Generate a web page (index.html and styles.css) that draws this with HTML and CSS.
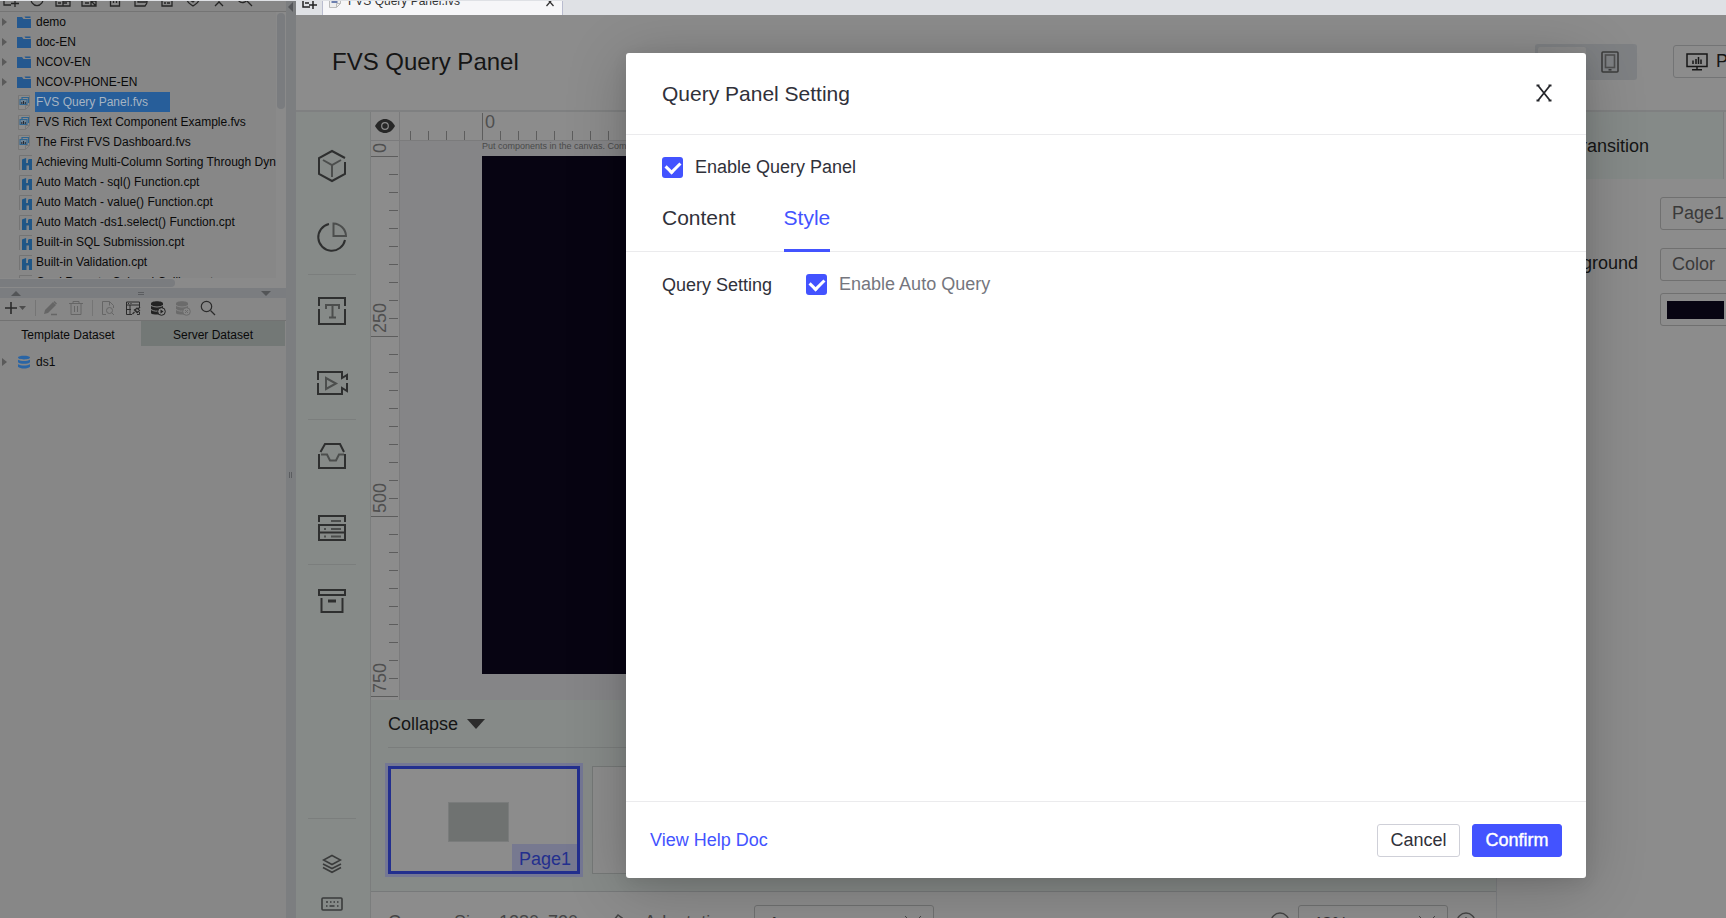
FILE: index.html
```html
<!DOCTYPE html>
<html lang="en">
<head>
<meta charset="utf-8">
<title>FVS Query Panel</title>
<link rel="stylesheet" href="styles.css">
</head>
<body>
<svg class="defs" aria-hidden="true">
  <symbol id="folder" viewBox="0 0 14 12"><path d="M0 1h5l1.500 2H14V12H0z" fill="#24588f"/><path d="M7.500 .6h6v1.500h-5z" fill="#24588f"/></symbol>
  <symbol id="fvs" viewBox="0 0 14 15"><path d="M1.500.5h11v10l-4 4h-7z" fill="#8b8b8b" stroke="#777"/><path d="M8.500 14v-3.500h4" fill="none" stroke="#777"/><path d="M5 4V2.500h6.500V8" fill="none" stroke="#2f6590" stroke-width="1.200"/><rect x="3" y="4.500" width="7" height="5" fill="#6f8495" stroke="#2f6590"/><path d="M4.800 9V7M6.500 9V6M8.300 9V7" stroke="#242a35"/></symbol>
  <symbol id="cpt" viewBox="0 0 14 15"><path d="M1.500 15V.5H14" fill="none" stroke="#747474"/><path d="M4 4.500L8 3v5h2V5l1-1h3v11h-3v-4.500H8.500V15H4z" fill="#1f5686"/><path d="M8.500 3v4.500M10 15v-4" fill="none" stroke="#6a8499" stroke-width=".8"/></symbol>
</svg>
<div class="app">
  <aside class="sidebar">
    <div class="file-tools">
      <button aria-label="New"><svg viewBox="0 0 16 16"><path d="M8 14H1V4h9M12 8v8M8 12.500h8"/></svg></button>
      <button aria-label="Refresh"><svg viewBox="0 0 16 16"><path d="M2.500 7a5.800 5.800 0 1 0 11 0M11 9h5"/></svg></button>
      <button aria-label="Open folder"><svg viewBox="0 0 16 16"><path d="M1 3v12h14V3M8 15v-5h7M3 9h3M3 12h3M8 12h4"/></svg></button>
      <button aria-label="Rename"><svg viewBox="0 0 16 16"><path d="M1 3v12h14V3M4 12h4M10 15v-5h5M10 10l5 5"/></svg></button>
      <button aria-label="Delete"><svg viewBox="0 0 16 16"><path d="M3.500 3v12h9V3M6.500 8v4M9.500 8v4"/></svg></button>
      <button aria-label="Copy"><svg viewBox="0 0 16 16"><path d="M2 6v9h10l2-3M5 3v8h9V3"/></svg></button>
      <button aria-label="Paste"><svg viewBox="0 0 16 16"><path d="M3 3v12h10V3M5 12h2M8 12h3M5 9h6"/></svg></button>
      <button aria-label="Permission"><svg viewBox="0 0 16 16"><path d="M2 8c0 4 3 5 6 7 3-2 6-3 6-7M5 9l3 2 3-3"/></svg></button>
      <button aria-label="Collapse tree"><svg viewBox="0 0 16 16"><path d="M4 15l4-4 4 4M8 5v6"/></svg></button>
      <button aria-label="Search"><svg viewBox="0 0 16 16"><path d="M1 9c3 4 8 3 9-1M9.500 9.500L15 15"/></svg></button>
    </div>
    <div class="tree-box">
      <ul class="tree">
        <li class="branch"><svg class="i-folder"><use href="#folder"/></svg><span>demo</span></li>
        <li class="branch"><svg class="i-folder"><use href="#folder"/></svg><span>doc-EN</span></li>
        <li class="branch"><svg class="i-folder"><use href="#folder"/></svg><span>NCOV-EN</span></li>
        <li class="branch"><svg class="i-folder"><use href="#folder"/></svg><span>NCOV-PHONE-EN</span></li>
        <li class="selected"><svg class="i-file"><use href="#fvs"/></svg><span>FVS Query Panel.fvs</span></li>
        <li><svg class="i-file"><use href="#fvs"/></svg><span>FVS Rich Text Component Example.fvs</span></li>
        <li><svg class="i-file"><use href="#fvs"/></svg><span>The First FVS Dashboard.fvs</span></li>
        <li><svg class="i-file i-cpt"><use href="#cpt"/></svg><span>Achieving Multi-Column Sorting Through Dynamic Parameters.cpt</span></li>
        <li><svg class="i-file i-cpt"><use href="#cpt"/></svg><span>Auto Match - sql() Function.cpt</span></li>
        <li><svg class="i-file i-cpt"><use href="#cpt"/></svg><span>Auto Match - value() Function.cpt</span></li>
        <li><svg class="i-file i-cpt"><use href="#cpt"/></svg><span>Auto Match -ds1.select() Function.cpt</span></li>
        <li><svg class="i-file i-cpt"><use href="#cpt"/></svg><span>Built-in SQL Submission.cpt</span></li>
        <li><svg class="i-file i-cpt"><use href="#cpt"/></svg><span>Built-in Validation.cpt</span></li>
        <li><svg class="i-file i-cpt"><use href="#cpt"/></svg><span>Card Report - Colored Calling.cpt</span></li>
      </ul>
      <div class="vscroll"><div class="vthumb"></div></div>
    </div>
    <div class="hscroll"><div class="hthumb"></div></div>
    <div class="split-h"><i class="up"></i><i class="grip"></i><i class="down"></i></div>
    <div class="data-tools">
      <button class="add" aria-label="Add dataset"><svg width="24" height="16" viewBox="0 0 24 16"><path d="M1 8h12M7 2v12" stroke="#2b2b2b" stroke-width="1.600"/><path d="M15 6h7l-3.500 4z" fill="#4d4d4d"/></svg></button>
      <i class="bar"></i>
      <button aria-label="Edit"><svg width="16" height="16" viewBox="0 0 16 16"><path d="M1 14l1-4 8-8 3 3-8 8z" fill="#666"/><path d="M11 1.500L13.500 4M8 14.500h6" stroke="#666" stroke-width="1.300"/></svg></button>
      <button aria-label="Delete"><svg width="16" height="16" viewBox="0 0 16 16" fill="none" stroke="#666"><path d="M1 3.500h14M5 3.500v-2h6v2M3 3.500v11h10v-11M6.500 6v6M9.500 6v6"/></svg></button>
      <i class="bar"></i>
      <button aria-label="Preview"><svg width="16" height="16" viewBox="0 0 16 16" fill="none" stroke="#666"><path d="M6 14.500H2.500V1.500h7l4 4V8M9.500 1.500v4"/><circle cx="9.500" cy="10.500" r="3"/><path d="M11.500 12.500l2.500 2.500"/></svg></button>
      <button aria-label="Connection"><svg width="16" height="16" viewBox="0 0 16 16" fill="none" stroke="#2b2b2b"><path d="M7 14.500H1.500V2h13v5M1.500 5h13M1.500 9.500H6M5 5v9M3 3.500h1M5.500 3.500h1M14.500 12v2.500H12"/><path d="M7.500 14l2-2M9 9.500l3.500 3.500M10 10l2-2 2.500 2.500-2 2zM13 9l2-2" stroke-width="1.200"/></svg></button>
      <button aria-label="Data cache"><svg width="16" height="16" viewBox="0 0 16 16"><path d="M1 3.500C1 .5 13 .5 13 3.500V13c0 2-12 2-12 0z" fill="#222"/><path d="M1 5.500c3 2 9 2 12 0M1 9.500c3 2 6 2 9 1" stroke="#878787" fill="none"/><circle cx="11.500" cy="11.500" r="3.800" fill="#878787" stroke="#222"/><path d="M10.500 9.500l3 2-3 2z" fill="#222"/></svg></button>
      <button aria-label="Clear cache"><svg width="16" height="16" viewBox="0 0 16 16"><path d="M1 3.500C1 .5 13 .5 13 3.500V13c0 2-12 2-12 0z" fill="#6b6b6b"/><path d="M1 5.500c3 2 9 2 12 0M1 9.500c3 2 6 2 9 1" stroke="#878787" fill="none"/><circle cx="11.500" cy="11.500" r="3.800" fill="#878787" stroke="#6b6b6b"/><path d="M10 10l3 3M13 10l-3 3" stroke="#6b6b6b"/></svg></button>
      <button aria-label="Search"><svg width="16" height="16" viewBox="0 0 16 16" fill="none" stroke="#2b2b2b" stroke-width="1.200"><circle cx="6.500" cy="6.500" r="5.200"/><path d="M10.500 10.500l4.500 4.500"/></svg></button>
    </div>
    <div class="data-tabs"><button class="on">Template Dataset</button><button>Server Dataset</button></div>
    <ul class="tree data-tree">
      <li class="branch"><svg class="i-folder i-db" viewBox="0 0 14 14"><path d="M1 2.500C1 0 13 0 13 2.500S1 5 1 2.500M1 4.800c3 1.600 9 1.600 12 0v2.400c-2 2-10 2-12 0zM1 9.300c3 1.600 9 1.600 12 0v2.500c-2 2.400-10 2.400-12 0z" fill="#2a65a5"/></svg><span>ds1</span></li>
    </ul>
  </aside>
  <div class="split-v"><i class="left"></i><i class="vgrip"></i></div>

  <div class="main">
    <div class="file-tabs">
      <button class="new-tab" aria-label="New tab"><svg width="16" height="16" viewBox="0 0 16 16" fill="none" stroke="#222" stroke-width="1.500"><path d="M9 13H2V3M4 9h4M4 5h4M12 7v8M8 11h8"/></svg></button>
      <div class="file-tab"><svg class="i-tab" viewBox="0 0 13 14"><path d="M.5.500h11v9l-4 4h-7z" fill="#eee" stroke="#bbb"/><path d="M7.500 13.500v-4h4" fill="none" stroke="#bbb"/><rect x="2.500" y="5" width="6" height="4" fill="#6d7fae"/></svg><span>FVS Query Panel.fvs</span><button aria-label="Close tab"><svg width="10" height="10" viewBox="0 0 10 10"><path d="M1.500 1l7 8M8.500 1l-7 8" stroke="#333" stroke-width="1.300"/></svg></button></div>
    </div>

    <div class="designer">
      <header class="head">
        <h1>FVS Query Panel</h1>
        <div class="head-actions">
          <div class="device"><button class="pc" aria-label="Desktop"></button><button class="phone" aria-label="Mobile"><svg width="18" height="22" viewBox="0 0 18 22" fill="none" stroke="#3c3c3c" stroke-width="1.600"><rect x="1" y="1" width="16" height="20" rx="1"/><rect x="4.500" y="4" width="9" height="12.500" stroke="#4e4e4e"/><path d="M7.500 18.800h3"/></svg></button></div>
          <button class="preview"><svg width="22" height="18" viewBox="0 0 22 18" fill="none" stroke="#161616" stroke-width="1.500"><rect x="1" y="1" width="20" height="12.500"/><path d="M11 13.500V17M6 16.800h10M7 11V7.500M10 11V6M12.500 11V4M15 11V6.500"/></svg><span>Preview</span></button>
        </div>
      </header>
      <div class="body">
        <nav class="tools">
          <button aria-label="3D"><svg width="30" height="34" viewBox="0 0 30 34"><path d="M28 9L15 2 2 9v16l13 7 13-7V13"/><path class="soft" d="M6 11l9 5 9-5M15 16v12"/></svg></button>
          <button aria-label="Chart"><svg width="32" height="34" viewBox="0 0 32 34"><path d="M13 3a13.500 13.500 0 1 0 16 16"/><path class="soft" d="M17.500 2.500v12.500H30A13 13 0 0 0 17.500 2.500z"/></svg></button>
          <hr>
          <button aria-label="Text"><svg width="30" height="30" viewBox="0 0 30 30"><path d="M2 10V2h26v8M2 13v15h26V13"/><path class="soft" d="M9 13V9h13v4M15.500 9v12M12 21.500h7"/></svg></button>
          <button aria-label="Media"><svg width="34" height="26" viewBox="0 0 34 26"><path d="M3 10V2h24v6l5-3v5M3 13v11h24v-6l5 3v-8"/><path class="soft" d="M11 8v11l10-5.500z"/></svg></button>
          <hr>
          <button aria-label="Box"><svg width="30" height="28" viewBox="0 0 30 28"><path d="M3.500 10L8 2h15l4 8M2 12v14h26V12"/><path class="soft" d="M4 12.500h6l3 6h6l3-6h5"/></svg></button>
          <button aria-label="Form"><svg width="30" height="28" viewBox="0 0 30 28"><path d="M2 8V2h26v6M2 11h26v15H2zM2 18.500h26"/><path class="soft" d="M14 7h10M14 15h10M14 22.500h10M7 15h2M7 22.500h2"/></svg></button>
          <hr>
          <button aria-label="Archive"><svg width="30" height="26" viewBox="0 0 30 26"><path d="M2 2h26v5H2zM4.500 10v14h21V10"/><path d="M11 13h8" stroke-width="3"/></svg></button>
          <div class="tools-end">
            <hr>
            <button aria-label="Layers"><svg class="thin" width="20" height="20" viewBox="0 0 20 20"><path d="M10 1.500l8.500 4.500-8.500 4.500L1.500 6zM1 10l9 4.500 9-4.500M1 13.500l9 4.800 9-4.800"/></svg></button>
            <button aria-label="Shortcuts"><svg class="thin" width="22" height="14" viewBox="0 0 22 14"><rect x="1" y="1" width="20" height="12" rx="1"/><path d="M5 5h2M9 5h1.500M12.500 5H14M16 5h1.500M5 9h1.500M8.500 9h5M16 9h1.500"/></svg></button>
          </div>
        </nav>
        <section class="work">
          <div class="stage">
            <button class="eye" aria-label="Show rulers"><svg width="20" height="14" viewBox="0 0 20 14"><path d="M0 7C3 2 6 0 10 0s7 2 10 7c-3 5-6 7-10 7S3 12 0 7z" fill="#272727"/><circle cx="10" cy="7" r="3.300" fill="none" stroke="#8c8c8c" stroke-width="1.200"/></svg></button>
            <div class="ruler-x"><div class="lead"></div><div class="seg">0</div></div>
            <div class="ruler-y"><div class="first"><span>0</span></div><div class="seg"><span>250</span></div><div class="seg"><span>500</span></div><div class="seg"><span>750</span></div></div>
            <div class="viewport"><p>Put components in the canvas. Components outside the canvas will not be displayed.</p><div class="canvas"></div></div>
          </div>
          <div class="pages">
            <button class="collapse">Collapse <i></i></button>
            <div class="thumbs">
              <button class="thumb current"><i></i><span>Page1</span></button>
              <button class="thumb" aria-label="Add page"></button>
            </div>
          </div>
          <footer class="status">
            <span>Canvas Size: 1280x720</span>
            <svg class="pencil" width="20" height="20" viewBox="0 0 20 20" fill="none" stroke="#444" stroke-width="1.500"><path d="M3 13L12 2l4 3-9 11-5 1zM10 5l4 3"/></svg>
            <label for="adapt">Adaptation</label>
            <select id="adapt"><option>Auto</option></select>
            <div class="zoomer">
              <button aria-label="Zoom out"><svg width="20" height="20" viewBox="0 0 20 20"><circle cx="10" cy="10" r="9"/><path d="M5 10h10"/></svg></button>
              <select class="pct" aria-label="Zoom"><option>48%</option></select>
              <button aria-label="Zoom in"><svg width="20" height="20" viewBox="0 0 20 20"><circle cx="10" cy="10" r="9"/><path d="M5 10h10M10 5v10"/></svg></button>
            </div>
          </footer>
        </section>
        <aside class="props">
          <div class="props-title">Page Transition</div>
          <div class="fields">
            <label for="pname">Name</label><input id="pname" value="Page1">
            <label for="pbg">Background</label><input id="pbg" value="Color">
            <span></span><button class="swatch" aria-label="Background color"><i></i></button>
          </div>
        </aside>
      </div>
    </div>

    <div class="overlay">
      <div class="modal" role="dialog" aria-labelledby="mt">
        <div class="modal-head"><h2 id="mt">Query Panel Setting</h2><button aria-label="Close"><svg width="16" height="18" viewBox="0 0 16 18"><path d="M2 1.500L14 16.500M14 1.500L2 16.500M.5 1.500h3M12.500 1.500h3M.5 16.500h3M12.500 16.500h3" stroke="#25262b" stroke-width="1.800"/></svg></button></div>
        <label class="check enable"><input type="checkbox" checked>Enable Query Panel</label>
        <div class="modal-tabs"><button>Content</button><button class="on">Style</button></div>
        <div class="setting"><span>Query Setting</span><label class="check muted"><input type="checkbox" checked>Enable Auto Query</label></div>
        <div class="modal-foot"><a href="#">View Help Doc</a><button>Cancel</button><button class="primary">Confirm</button></div>
      </div>
    </div>
  </div>
</div>
</body>
</html>
```

FILE: styles.css
```css
* { box-sizing: border-box; }
body { margin: 0; overflow: hidden; font-family: "Liberation Sans", Arial, sans-serif; font-size: 18px; color: #151515; }
button { font: inherit; color: inherit; background: none; border: 0; padding: 0; margin: 0; }
ul, p, h1, h2 { margin: 0; padding: 0; font-weight: normal; list-style: none; }
svg { display: block; flex: none; }
.defs { display: none; }
.app { display: flex; height: 100vh; border-top: 1px solid #dfe1e5; }

/* file sidebar */
.sidebar { width: 286px; flex: none; display: flex; flex-direction: column; background: #878787; font-size: 12px; color: #0a0a0a; }
.file-tools { height: 11px; flex: none; overflow: hidden; display: flex; align-items: flex-end; gap: 10px; padding: 0 0 4px 3px; border-bottom: 1px solid #747474; }
.file-tools svg { width: 16px; height: 16px; fill: none; stroke: #262626; stroke-width: 1.3; }
.tree-box { height: 266px; flex: none; display: flex; overflow: hidden; }
.tree { flex: 1; min-width: 0; overflow: hidden; }
.tree li { height: 20px; display: flex; align-items: center; padding-left: 17px; white-space: nowrap; }
.tree .branch { padding-left: 2px; }
.branch::before { content: ""; border: solid transparent; border-width: 4px 0 4px 5px; border-left-color: #5a5a5a; margin-right: 10px; }
.i-folder { width: 14px; height: 12px; margin-right: 4px; }
.i-db { height: 14px; }
.i-file { width: 14px; height: 15px; margin-right: 4px; }
.i-cpt { margin: 0 3px 0 1px; }
.tree span { line-height: 20px; padding: 0 1px; }
.selected span { width: 135px; background: #275e9a; color: #a6b4c2; }
.vscroll { width: 10px; padding: 1px; background: #8a8a8a; }
.vthumb { height: 96px; border-radius: 4px; background: #7a7c7f; }
.hscroll { height: 10px; flex: none; padding: 1px 0; background: #8a8a8a; }
.hthumb { width: 175px; height: 8px; border-radius: 0 4px 4px 0; background: #7a7c7f; }
.split-h { height: 10px; flex: none; background: #7b7d80; display: flex; align-items: center; justify-content: space-between; padding: 0 15px 0 11px; }
.up { border: solid transparent; border-width: 0 5px 5px; border-bottom-color: #535557; }
.down { border: solid transparent; border-width: 5px 5px 0; border-top-color: #535557; }
.grip { width: 6px; height: 3px; border: solid #5b5d60; border-width: 1px 0; }
.data-tools { height: 23px; flex: none; display: flex; align-items: center; gap: 9px; padding: 0 0 2px 4px; border-bottom: 1px solid #727272; }
.data-tools .bar { width: 1px; height: 16px; background: #757575; margin: 0 -2px 0 -1px; }
.data-tools .add { margin-right: -1px; }
.data-tabs { display: flex; height: 25px; flex: none; padding-right: 1px; }
.data-tabs button { flex: 1; padding-top: 2px; background: #737876; }
.data-tabs .on { flex: none; width: 141px; background: none; padding-right: 5px; }
.data-tree { padding-top: 6px; }
.split-v { width: 10px; flex: none; background: #7c7e80; display: flex; flex-direction: column; align-items: center; justify-content: space-between; padding: 1px 1px 0 0; }
.left { border: solid transparent; border-width: 5px 5px 5px 0; border-right-color: #55575a; }
.vgrip { width: 3px; height: 6px; border: solid #5b5d60; border-width: 0 1px; margin: 0 0 440px; }

/* document tabs */
.main { flex: 1; min-width: 0; display: flex; flex-direction: column; position: relative; }
.file-tabs { height: 14px; flex: none; overflow: hidden; display: flex; align-items: flex-end; background: #dfe1e5; font-size: 12px; color: #333; }
.new-tab { width: 26px; padding: 0 0 5px 5px; }
.file-tab { width: 241px; height: 28px; display: flex; align-items: center; background: #f6f6f8; border: solid #b9bccf; border-width: 0 1px; padding: 0 7px 0 6px; }
.i-tab { width: 13px; height: 14px; margin-right: 6px; }
.file-tab span { flex: 1; }
.file-tab button { padding-top: 2px; }

/* designer */
.designer { flex: 1; min-height: 0; display: flex; flex-direction: column; background: #8c8c8c; }
.head { height: 97px; flex: none; display: flex; align-items: center; justify-content: space-between; padding: 0 0 2px 36px; border-bottom: 2px solid #7f8081; }
.head h1 { font-size: 24px; }
.head-actions { width: 191px; display: flex; align-items: center; gap: 36px; overflow: hidden; }
.device { width: 102px; height: 36px; flex: none; display: flex; padding: 3px; border-radius: 3px; background: #7e8083; }
.device button { flex: 1; display: flex; align-items: center; justify-content: center; border-radius: 2px; }
.pc { background: #8a8a8a; }
.preview { display: flex; align-items: center; gap: 8px; height: 33px; width: 120px; flex: none; padding-left: 12px; border: 1px solid #737475; border-radius: 3px; }
.body { flex: 1; min-height: 0; display: flex; }
.tools { width: 75px; flex: none; display: flex; flex-direction: column; padding-top: 18px; background: #868a88; border-right: 1px solid #7b7d7d; }
.tools button { height: 72px; width: 100%; padding-right: 2px; display: flex; align-items: center; justify-content: center; }
.tools hr { width: 48px; height: 1px; margin: 0 auto 0 12px; border: 0; background: #7b7e7d; flex: none; }
.tools svg { fill: none; stroke: #2e2f2f; stroke-width: 2; }
.tools .soft { stroke: #4c4e4d; }
.tools .thin { stroke: #3a3b3b; stroke-width: 1.6; }
.tools-end { margin-top: auto; height: 100px; overflow: hidden; }
.tools-end hr { margin-bottom: 25px; }
.tools-end button { height: 40px; }

.work { flex: 1; min-width: 0; display: flex; flex-direction: column; }
.stage { flex: 1; min-height: 0; display: grid; grid-template: 29px minmax(0, 1fr) / 29px minmax(0, 1fr); overflow: hidden; }
.eye { display: flex; align-items: center; justify-content: center; border: solid #7b7b7c; border-width: 0 1px 1px 0; }
.ruler-x { display: flex; border-bottom: 1px solid #7b7b7c; color: #4f4f4f; padding-top: 1px; }
.ruler-x .lead { width: 82px; background: repeating-linear-gradient(to left, transparent 0 17px, #5d5d5d 17px 18px) right bottom / 100% 9px no-repeat; }
.ruler-x .seg { flex: 1; border-left: 1px solid #5d5d5d; padding-left: 2px; line-height: 18px; background: repeating-linear-gradient(to right, transparent 0 17px, #5d5d5d 17px 18px) left bottom / 100% 9px no-repeat; }
.ruler-y { border-right: 1px solid #7b7b7c; color: #4f4f4f; overflow: hidden; }
.ruler-y div { height: 180px; display: flex; align-items: flex-end; margin-right: 1px; border-bottom: 1px solid #5d5d5d; background: repeating-linear-gradient(to bottom, transparent 0 17px, #5d5d5d 17px 18px) right top / 9px 100% no-repeat; }
.ruler-y .first { height: 16px; background: none; }
.ruler-y span { writing-mode: vertical-rl; transform: rotate(180deg); line-height: 18px; padding-top: 3px; }
.viewport { background: #858587; padding-left: 82px; overflow: hidden; }
.viewport p { height: 15px; line-height: 11px; font-size: 9px; color: #4a4a4a; white-space: nowrap; }
.canvas { width: 921px; height: 518px; background: #070412; }

.pages { height: 191px; flex: none; padding: 0 17px; background: #868a88; }
.collapse { display: flex; align-items: center; gap: 9px; width: 100%; height: 48px; padding-top: 1px; border-bottom: 1px solid #7a7d7c; }
.collapse i { border: solid transparent; border-width: 10px 9px 0; border-top-color: #2c2c2c; }
.thumbs { display: flex; gap: 12px; padding-top: 18px; }
.thumb { position: relative; width: 192px; height: 108px; background: #8c8c8c; border: 1px solid #757877; display: flex; align-items: center; justify-content: center; }
.current { border: 3px solid #232f8e; box-shadow: 0 0 0 3px #747794; color: #232f8e; }
.current i { width: 61px; height: 40px; margin: 4px 12px 0 0; background: #6f7271; border: 1px solid #7a7c7c; }
.current span { position: absolute; right: 0; bottom: 0; width: 65px; height: 27px; line-height: 30px; padding-left: 1px; background: #777990; }
.status { height: 27px; flex: none; overflow: hidden; display: flex; align-items: flex-start; padding: 13px 20px 0 17px; border-top: 1px solid #77797a; color: #454545; line-height: 35px; white-space: nowrap; }
.pencil { margin: 8px 18px 0 28px; }
.status select { appearance: none; width: 180px; height: 33px; flex: none; margin-left: 24px; padding: 1px 13px 0; font: inherit; color: #333; background: linear-gradient(45deg, transparent 44%, #444 44% 56%, transparent 56%) right 20px top 10px / 8px 8px no-repeat, linear-gradient(-45deg, transparent 44%, #444 44% 56%, transparent 56%) right 12px top 10px / 8px 8px no-repeat, #8c8c8c; border: 1px solid #6f7070; border-radius: 3px; }
.zoomer { display: flex; margin-left: auto; gap: 8px; }
.zoomer button { padding-top: 7px; height: 27px; }
.zoomer svg { fill: none; stroke: #444; stroke-width: 1.4; }
.status .pct { width: 150px; margin: 0; }

.props { width: 230px; flex: none; overflow: hidden; border-left: 1px solid #7e7f82; }
.props-title { height: 67px; line-height: 68px; padding-left: 27px; margin-right: 2px; background: #858a88; border-right: 1px solid #7b7d7d; }
.fields { display: grid; grid-template-columns: 116px 200px; column-gap: 22px; padding: 18px 0 0 25px; align-items: center; }
.fields input, .swatch { width: 200px; height: 33px; padding: 0 11px; font: inherit; color: #3a3a3a; background: #8c8c8c; border: 1px solid #707070; border-radius: 3px; margin: 0 0 18px; }
.fields label { margin-bottom: 18px; }
.fields #pbg { margin-bottom: 12px; }
.fields label[for=pbg] { margin-bottom: 14px; justify-self: end; }
.swatch { display: flex; align-items: center; padding: 0 6px; }
.swatch i { width: 57px; height: 18px; background: #070412; }

/* dialog */
.overlay { position: absolute; inset: 14px 0 0; display: flex; justify-content: flex-end; padding: 38px 140px 40px 0; overflow: hidden; }
.modal { width: 960px; background: #fff; border-radius: 3px; box-shadow: 0 8px 60px rgba(0, 0, 0, .22), 0 4px 16px rgba(0, 0, 0, .08); display: flex; flex-direction: column; color: #30313a; }
.modal-head { height: 82px; flex: none; display: flex; align-items: center; justify-content: space-between; padding: 0 34px 0 36px; border-bottom: 1px solid #ebebed; }
.modal-head h2 { font-size: 21px; }
.modal-head button { padding-bottom: 2px; }
.check { display: flex; align-items: center; gap: 12px; line-height: 23px; height: 21px; }
.check input { appearance: none; width: 21px; height: 21px; margin: 0; border-radius: 3px; background: #4353ff; display: flex; align-items: center; justify-content: center; }
.check input::before { content: ""; width: 7px; height: 11px; border: solid #fff; border-width: 0 3px 3px 0; transform: translateY(-2px) rotate(45deg); }
.enable { margin: 22px 36px 0; }
.muted { color: #75767e; }
.modal-tabs { height: 74px; flex: none; display: flex; gap: 48px; padding: 0 36px; border-bottom: 1px solid #ebebed; font-size: 21px; }
.modal-tabs button { height: 74px; padding: 9px 0 0; border-bottom: 3px solid transparent; }
.modal-tabs .on { color: #4353ff; border-color: #4353ff; }
.setting { flex: 1; display: flex; align-items: flex-start; gap: 34px; padding: 22px 36px; line-height: 23px; }
.modal-foot { height: 77px; flex: none; display: flex; align-items: center; gap: 12px; padding: 0 24px; border-top: 1px solid #ebebed; }
.modal-foot a { margin-right: auto; color: #4353ff; text-decoration: none; }
.modal-foot button { height: 33px; min-width: 83px; border: 1px solid #cfd0d8; border-radius: 3px; }
.modal-foot .primary { min-width: 90px; background: #4353ff; border-color: #4353ff; color: #fff; -webkit-text-stroke: 0.4px #fff; }
```
